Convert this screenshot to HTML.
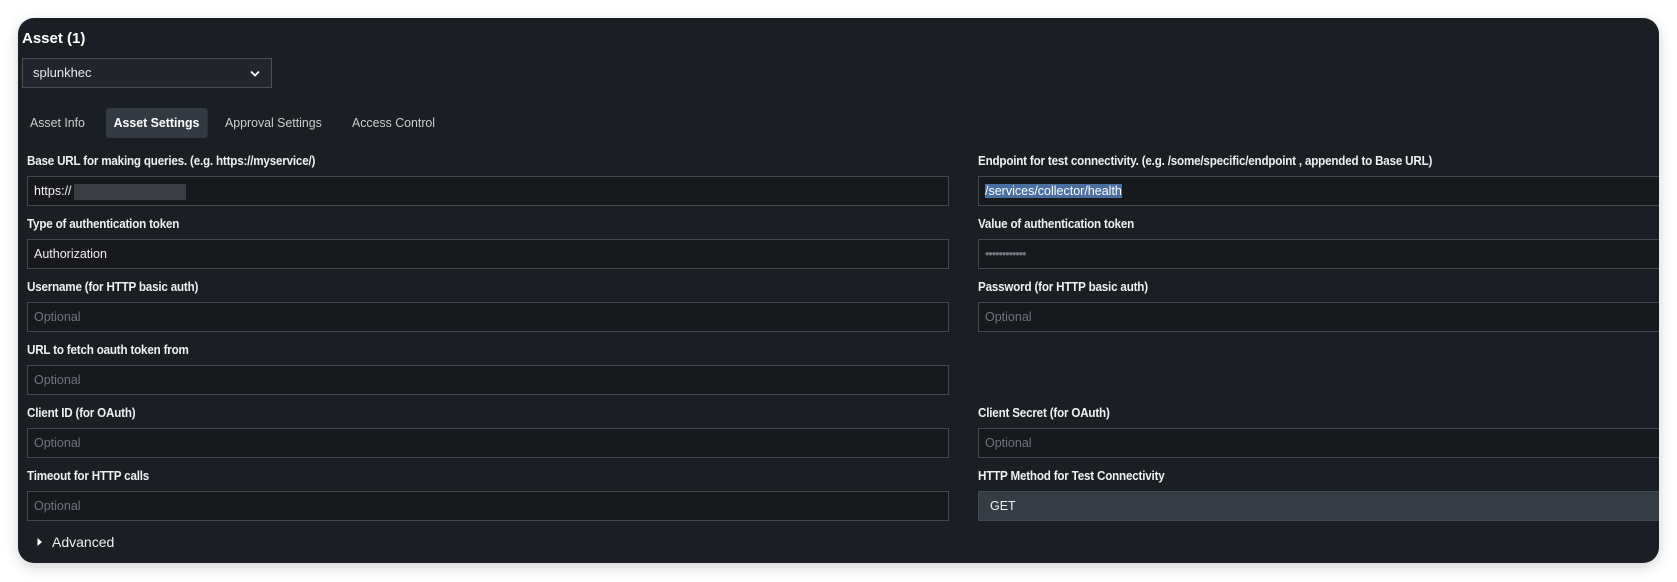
<!DOCTYPE html>
<html><head><style>
*{box-sizing:border-box;margin:0;padding:0}
body{width:1677px;height:582px;background:#fff;position:relative;overflow:hidden;font-family:"Liberation Sans",sans-serif}
.panel{position:absolute;left:18px;top:18px;width:1641px;height:545px;background:#1b1e22;border-radius:16px;box-shadow:0 4px 14px rgba(0,0,0,.18);overflow:hidden}
.a{position:absolute}
.title{left:4px;top:12px;font-size:15px;font-weight:bold;color:#fff}
.dd{left:4px;top:40px;width:250px;height:30px;background:#22262c;border:1px solid #4a5058;color:#e8e8e8;font-size:13px;line-height:28px;padding-left:10px}
.dd svg{position:absolute;right:11px;top:11px}
.tab{top:90px;height:30px;line-height:30px;font-size:13px;color:#c9ccd0;transform:scaleX(.95);transform-origin:left}
.tab.on{background:#343a42;border-radius:3px;color:#fff;font-weight:bold;padding:0 8px;width:107px}
.lbl{font-size:12.5px;color:#f0f0f0;font-weight:bold;letter-spacing:-.2px;transform:scaleX(.93);transform-origin:left}
.in{height:30px;border:1px solid #444a53;background:#17191d;font-size:12.5px;line-height:28px;padding-left:6px;color:#f0f0f0}
.ph{color:#6f767e}
.L{left:9px;width:922px}
.R{left:960px;width:700px}
</style></head><body>
<div class="panel">
<div class="a title">Asset (1)</div>
<div class="a dd">splunkhec<svg width="10" height="7" viewBox="0 0 10 7"><path d="M1 1.5L5 5.5L9 1.5" stroke="#fff" stroke-width="1.8" fill="none"/></svg></div>
<div class="a tab" style="left:12px">Asset Info</div>
<div class="a tab on" style="left:88px">Asset Settings</div>
<div class="a tab" style="left:207px">Approval Settings</div>
<div class="a tab" style="left:334px">Access Control</div>

<div class="a lbl" style="left:9px;top:136px">Base URL for making queries. (e.g. https://myservice/)</div>
<div class="a in L" style="top:158px">https://<span style="display:inline-block;width:112px;height:16px;background:#3a3d41;vertical-align:middle;margin-left:2px"></span></div>
<div class="a lbl" style="left:960px;top:136px">Endpoint for test connectivity. (e.g. /some/specific/endpoint , appended to Base URL)</div>
<div class="a in R" style="top:158px"><span style="background:#4a6f9f;color:#fff">/services/collector/health</span></div>

<div class="a lbl" style="left:9px;top:199px">Type of authentication token</div>
<div class="a in L" style="top:221px">Authorization</div>
<div class="a lbl" style="left:960px;top:199px">Value of authentication token</div>
<div class="a in R ph" style="top:221px;letter-spacing:-1px">••••••••••••</div>

<div class="a lbl" style="left:9px;top:262px">Username (for HTTP basic auth)</div>
<div class="a in L ph" style="top:284px">Optional</div>
<div class="a lbl" style="left:960px;top:262px">Password (for HTTP basic auth)</div>
<div class="a in R ph" style="top:284px">Optional</div>

<div class="a lbl" style="left:9px;top:325px">URL to fetch oauth token from</div>
<div class="a in L ph" style="top:347px">Optional</div>

<div class="a lbl" style="left:9px;top:388px">Client ID (for OAuth)</div>
<div class="a in L ph" style="top:410px">Optional</div>
<div class="a lbl" style="left:960px;top:388px">Client Secret (for OAuth)</div>
<div class="a in R ph" style="top:410px">Optional</div>

<div class="a lbl" style="left:9px;top:451px">Timeout for HTTP calls</div>
<div class="a in L ph" style="top:473px">Optional</div>
<div class="a lbl" style="left:960px;top:451px">HTTP Method for Test Connectivity</div>
<div class="a in R" style="top:473px;background:#363c44;padding-left:11px">GET</div>

<svg class="a" style="left:19px;top:519px" width="6" height="10" viewBox="0 0 6 10"><path d="M0.5 1L5 5L0.5 9Z" fill="#fff"/></svg>
<div class="a" style="left:34px;top:516px;font-size:14px;color:#f0f0f0">Advanced</div>
</div>
</body></html>
